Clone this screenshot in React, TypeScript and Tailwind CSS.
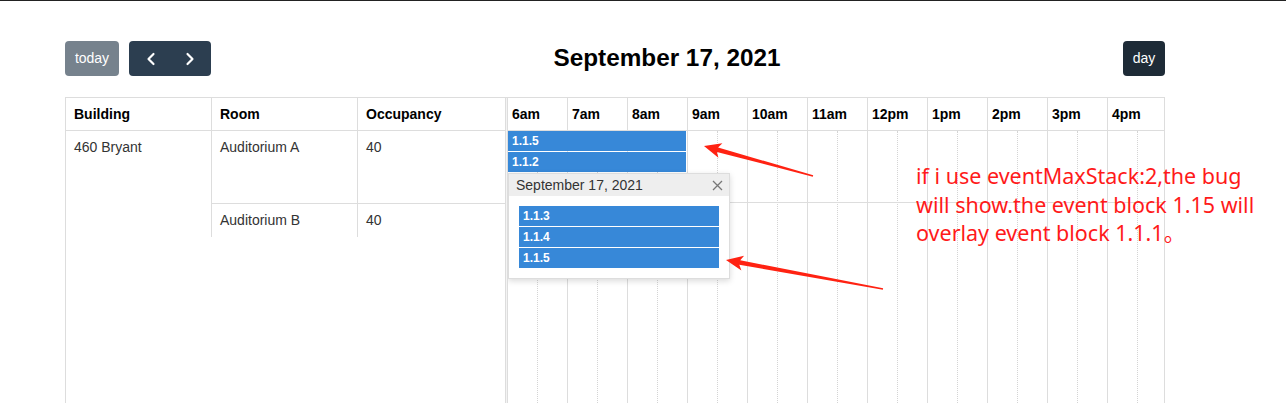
import { ChevronLeft, ChevronRight } from 'lucide-react';

const HOURS = ['6am', '7am', '8am', '9am', '10am', '11am', '12pm', '1pm', '2pm', '3pm', '4pm'];

// polygon for the tapering red arrows of the screenshot tool
function arrowPoints(tx: number, ty: number, ex: number, ey: number) {
  const dx = ex - tx;
  const dy = ey - ty;
  const len = Math.hypot(dx, dy);
  const ux = dx / len;
  const uy = dy / len;
  const nx = -uy;
  const ny = ux;
  const hl = 17;
  const hw = 7.5;
  const sw = 2.3;
  const p = (a: number, b: number) => `${(tx + a * ux + b * nx).toFixed(1)},${(ty + a * uy + b * ny).toFixed(1)}`;
  return [
    p(0, 0),
    p(hl, hw),
    p(hl - 3, sw),
    p(len, 0.7),
    p(len, -0.7),
    p(hl - 3, -sw),
    p(hl, -hw),
  ].join(' ');
}

function Ev({ label, className }: { label: string; className?: string }) {
  return (
    <div
      className={`flex h-[20px] items-center border border-[#3788d8] bg-[#3788d8] pl-[3px] text-[12px] font-bold text-white ${className ?? ''}`}
    >
      {label}
    </div>
  );
}

export default function App() {
  return (
    <div className="relative h-[403px] w-[1286px] overflow-hidden bg-white font-['Liberation_Sans',Arial,sans-serif] text-[#222]">
      <div className="h-px bg-[#222]" />

      <div className="ml-[65px] w-[1100px] pt-[40px]">
        {/* toolbar */}
        <div className="flex h-[35px] items-center justify-between">
          <div className="flex gap-[10px]">
            <button className="flex h-[35px] w-[54px] items-center justify-center rounded-[4px] bg-[#76828d] text-[14px] text-white">
              today
            </button>
            <div className="flex h-[35px] w-[82px] overflow-hidden rounded-[4px] bg-[#2c3e50] text-white">
              <button className="flex w-[41px] items-center justify-center pl-[2px]">
                <ChevronLeft size={20} strokeWidth={2.6} />
              </button>
              <button className="flex w-[41px] items-center justify-center pr-[2px]">
                <ChevronRight size={20} strokeWidth={2.6} />
              </button>
            </div>
          </div>
          <h2 className="text-[24.3px] font-bold leading-none text-black">September 17, 2021</h2>
          <button className="flex h-[35px] w-[42px] items-center justify-center rounded-[4px] bg-[#1e2b37] text-[14px] text-white">
            day
          </button>
        </div>

        {/* resource timeline */}
        <div className="mt-[21px] flex h-[330px] border-x border-t border-[#ddd]">
          {/* resource area */}
          <div className="w-[439px] shrink-0">
            <div className="flex h-[33px] border-b border-[#ddd] text-[14px] font-bold text-black">
              <div className="flex w-[146px] items-center border-r border-[#ddd] px-[8px]">Building</div>
              <div className="flex w-[146px] items-center border-r border-[#ddd] px-[8px]">Room</div>
              <div className="flex w-[147px] items-center px-[8px]">Occupancy</div>
            </div>
            <div className="grid grid-cols-[146px_146px_147px] grid-rows-[73px_33px] text-[14px] leading-[16px] text-[#333]">
              <div className="row-span-2 border-r border-[#ddd] px-[8px] pt-[8px]">460 Bryant</div>
              <div className="border-r border-b border-[#ddd] px-[8px] pt-[8px]">Auditorium A</div>
              <div className="border-b border-[#ddd] px-[8px] pt-[8px]">40</div>
              <div className="border-r border-[#ddd] px-[8px] pt-[8px]">Auditorium B</div>
              <div className="px-[8px] pt-[8px]">40</div>
            </div>
          </div>

          {/* divider */}
          <div className="w-[3px] shrink-0 border-x border-[#ddd] bg-[#f3f3f3]" />

          {/* timeline */}
          <div className="w-[656px] shrink-0 overflow-hidden">
            <div className="flex h-[33px] w-[660px] border-b border-[#ddd] text-[14px] font-bold text-black">
              {HOURS.map((h) => (
                <div key={h} className="flex w-[60px] shrink-0 items-center border-r border-[#ddd] pl-[4px]">
                  {h}
                </div>
              ))}
            </div>
            <div className="relative h-[300px] w-[660px]">
              <div className="flex h-full">
                {HOURS.map((h) => (
                  <div key={h} className="flex w-[60px] shrink-0 border-r border-[#ddd]">
                    <div className="w-[30px] border-r border-dotted border-[#d4d4d4]" />
                  </div>
                ))}
              </div>

              {/* row lines */}
              <div className="absolute inset-x-0 top-0 h-[72px] border-b border-[#ddd]" />

              {/* events */}
              <div className="absolute left-0 top-0 flex w-[178px] flex-col gap-[1px]">
                <Ev label="1.1.5" />
                <Ev label="1.1.2" />
              </div>

              {/* more-link popover */}
              <div className="absolute left-0 top-[42px] h-[106px] w-[222px] border border-[#ddd] bg-white shadow-[0_2px_6px_rgba(0,0,0,0.15)]">
                <div className="flex h-[22px] items-center justify-between bg-[#eee] pl-[7px] pr-[6px] text-[14px] text-[#333]">
                  <span>September 17, 2021</span>
                  <svg width="11" height="11" viewBox="0 0 11 11" className="text-[#777]">
                    <path d="M1 1 L10 10 M10 1 L1 10" stroke="currentColor" strokeWidth="1.3" fill="none" />
                  </svg>
                </div>
                <div className="flex flex-col gap-[1px] px-[10px] pt-[10px]">
                  <Ev label="1.1.3" />
                  <Ev label="1.1.4" />
                  <Ev label="1.1.5" />
                </div>
              </div>
            </div>
          </div>
        </div>
      </div>

      {/* annotation */}
      <svg className="pointer-events-none absolute left-0 top-0" width="1286" height="403">
        <polygon points={arrowPoints(704, 146, 813, 176)} fill="#ff2212" />
        <polygon points={arrowPoints(726, 260, 883, 289)} fill="#ff2212" />
      </svg>
      <div className="absolute left-[916px] top-[162px] font-['Noto_Sans','Noto_Sans_CJK_SC',sans-serif] text-[21.5px] leading-[28.5px] text-[#ff1a1a]">
        <div>if i use eventMaxStack:2,the bug</div>
        <div>will show.the event block 1.15 will</div>
        <div>overlay event block 1.1.1。</div>
      </div>
    </div>
  );
}
